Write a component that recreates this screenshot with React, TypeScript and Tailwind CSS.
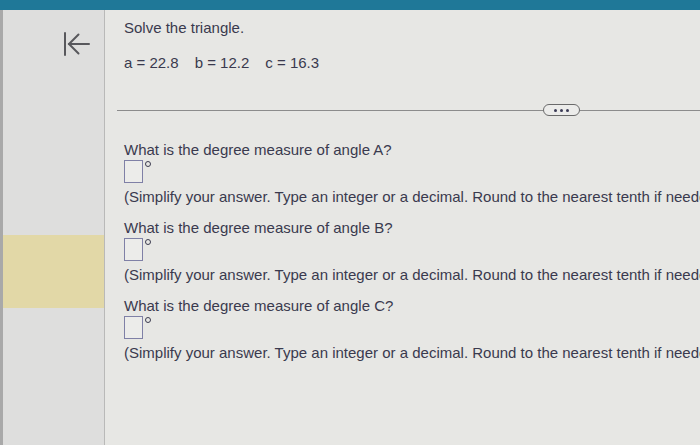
import React from 'react'

const QUESTIONS = ['A', 'B', 'C']

function FirstIcon() {
  return (
    <svg width="28" height="24" viewBox="0 0 28 24" fill="none" stroke="#58585c" strokeWidth={2} strokeLinecap="round">
      <path d="M2 1v22" />
      <path d="M6 12h20" />
      <path d="M15.5 2.5L6 12l9.5 9.5" />
    </svg>
  )
}

function Question({ label }: { label: string }) {
  return (
    <div className="flex flex-col">
      <div className="h-[18px] leading-[18px]">What is the degree measure of angle {label}?</div>
      <div className="flex items-start mt-px">
        <div className="w-[19px] h-[23px] border border-[#7f80a6] bg-[#ececea]" />
        <span className="w-[6px] h-[6px] ml-[2px] mt-[1px] rounded-full border border-[#3c3c50]" />
      </div>
      <div className="h-[18px] leading-[18px] mt-[5px]">
        (Simplify your answer. Type an integer or a decimal. Round to the nearest tenth if needed.)
      </div>
    </div>
  )
}

export default function App() {
  return (
    <div
      className="w-[700px] h-[445px] overflow-hidden flex flex-col bg-[#e7e7e4] text-[#3a3a4e] text-[15px]"
      style={{ fontFamily: '"Liberation Sans", Arial, sans-serif' }}
    >
      {/* Top bar */}
      <div className="h-[10px] shrink-0 bg-[#1f7898]" />

      <div className="flex flex-1 min-h-0">
        {/* Sidebar */}
        <div className="w-[105px] shrink-0 flex flex-col bg-[#dededd] border-l-[3px] border-l-[#a9a9a9] border-r border-r-[#b9b9b8]">
          <div className="mt-[22px] ml-[60px]">
            <FirstIcon />
          </div>
          <div className="mt-[179px] h-[73px] bg-[#e2d8a7]" />
        </div>

        {/* Main */}
        <div className="flex-1 flex flex-col whitespace-nowrap min-w-0">
          <div className="pl-[19px] pt-[9px] leading-[18px]">Solve the triangle.</div>
          <div className="pl-[19px] mt-[17px] leading-[18px] flex gap-4">
            <span>a = 22.8</span>
            <span>b = 12.2</span>
            <span>c = 16.3</span>
          </div>

          {/* Divider with more button */}
          <div className="mt-[32px] ml-[12px] h-[12px] flex items-center">
            <div className="w-[426px] h-px bg-[#8c8c8c]" />
            <div className="w-[37px] h-[12px] shrink-0 rounded-full border border-[#6a6a6a] bg-[#ececea] flex items-center justify-center gap-[3px]">
              <span className="w-[3px] h-[3px] rounded-full bg-[#3c3c56]" />
              <span className="w-[3px] h-[3px] rounded-full bg-[#3c3c56]" />
              <span className="w-[3px] h-[3px] rounded-full bg-[#3c3c56]" />
            </div>
            <div className="flex-1 h-px bg-[#8c8c8c]" />
          </div>

          <div className="pl-[19px] mt-[25px] flex flex-col gap-[13px]">
            {QUESTIONS.map((q) => (
              <Question key={q} label={q} />
            ))}
          </div>
        </div>
      </div>
    </div>
  )
}
